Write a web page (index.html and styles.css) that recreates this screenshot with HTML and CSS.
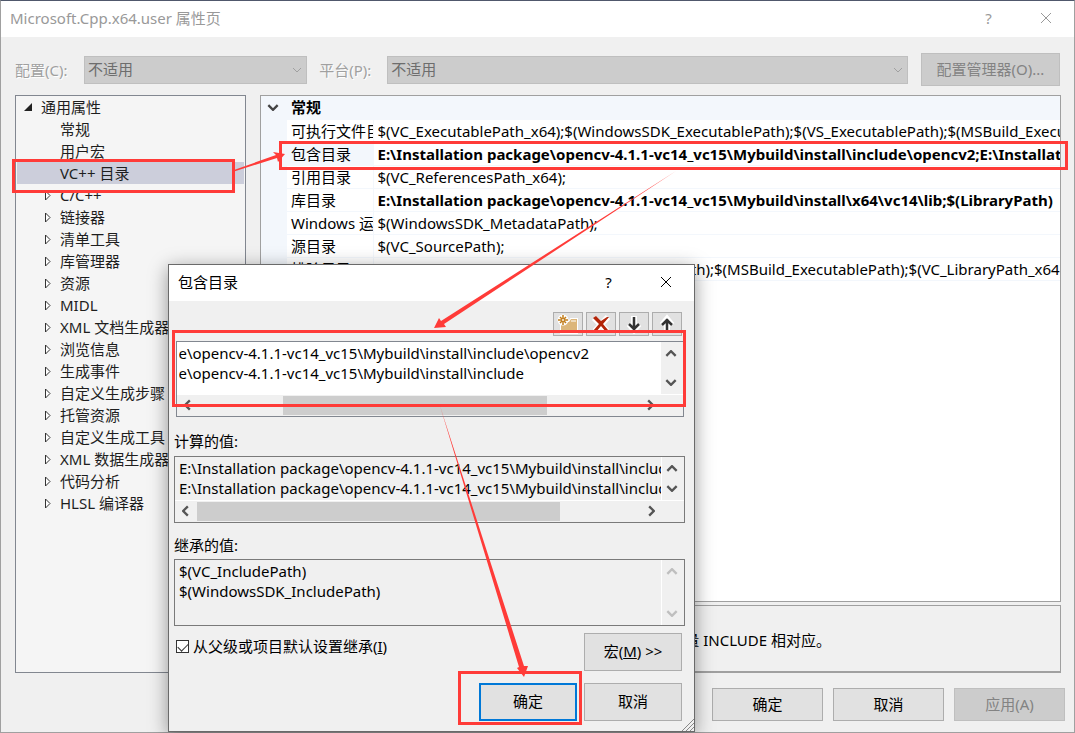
FILE: index.html
```html
<!DOCTYPE html>
<html lang="zh-CN">
<head>
    <meta charset="UTF-8">
    <meta name="viewport" content="width=device-width, initial-scale=1.0">
    <title>Microsoft.Cpp.x64.user 属性页</title>
    <link rel="stylesheet" href="styles.css">
</head>
<body>
    <svg class="sprite" width="0" height="0">
        <symbol id="close" viewBox="0 0 12 12"><path d="M1 1 11 11M11 1 1 11" fill="none" stroke="currentColor"/></symbol>
        <symbol id="down" viewBox="0 0 10 6"><path d="M1 1 5 5 9 1" fill="none" stroke="currentColor" stroke-width="2"/></symbol>
        <symbol id="up" viewBox="0 0 10 6"><path d="M1 5 5 1 9 5" fill="none" stroke="currentColor" stroke-width="2"/></symbol>
        <symbol id="left" viewBox="0 0 6 10"><path d="M5 1 1 5 5 9" fill="none" stroke="currentColor" stroke-width="2"/></symbol>
        <symbol id="right" viewBox="0 0 6 10"><path d="M1 1 5 5 1 9" fill="none" stroke="currentColor" stroke-width="2"/></symbol>
        <symbol id="node" viewBox="0 0 6 11"><path d="M.5 1V10L5 5.500Z" fill="#fff" stroke="#333"/></symbol>
    </svg>

    <div class="window">
        <header class="titlebar">
            <h1>Microsoft.Cpp.x64.user 属性页</h1>
            <button class="caption-btn" aria-label="帮助">?</button>
            <button class="caption-btn" aria-label="关闭"><svg width="12" height="12"><use href="#close"/></svg></button>
        </header>

        <div class="config-bar">
            <label for="config">配置(C):</label>
            <div class="combo combo-config">
                <select id="config" disabled><option>不适用</option></select>
                <svg class="combo-arrow" viewBox="0 0 10 6"><path d="M1 1 5 5 9 1" fill="none" stroke="currentColor"/></svg>
            </div>
            <label class="platform-label" for="platform">平台(P):</label>
            <div class="combo combo-platform">
                <select id="platform" disabled><option>不适用</option></select>
                <svg class="combo-arrow" viewBox="0 0 10 6"><path d="M1 1 5 5 9 1" fill="none" stroke="currentColor"/></svg>
            </div>
            <button class="btn manager-btn" disabled>配置管理器(O)...</button>
        </div>

        <main class="content">
            <ul class="tree">
                <li class="root"><svg width="8" height="8"><path d="M8 0V8H0Z" fill="#222"/></svg>通用属性</li>
                <li>常规</li>
                <li>用户宏</li>
                <li class="selected">VC++ 目录</li>
                <li><svg class="node"><use href="#node"/></svg>C/C++</li>
                <li><svg class="node"><use href="#node"/></svg>链接器</li>
                <li><svg class="node"><use href="#node"/></svg>清单工具</li>
                <li><svg class="node"><use href="#node"/></svg>库管理器</li>
                <li><svg class="node"><use href="#node"/></svg>资源</li>
                <li><svg class="node"><use href="#node"/></svg>MIDL</li>
                <li><svg class="node"><use href="#node"/></svg>XML 文档生成器</li>
                <li><svg class="node"><use href="#node"/></svg>浏览信息</li>
                <li><svg class="node"><use href="#node"/></svg>生成事件</li>
                <li><svg class="node"><use href="#node"/></svg>自定义生成步骤</li>
                <li><svg class="node"><use href="#node"/></svg>托管资源</li>
                <li><svg class="node"><use href="#node"/></svg>自定义生成工具</li>
                <li><svg class="node"><use href="#node"/></svg>XML 数据生成器</li>
                <li><svg class="node"><use href="#node"/></svg>代码分析</li>
                <li><svg class="node"><use href="#node"/></svg>HLSL 编译器</li>
            </ul>

            <div class="properties">
                <div class="grid">
                    <table>
                        <colgroup><col class="col-gutter"><col class="col-name"><col></colgroup>
                        <thead>
                            <tr><th class="gutter"><svg width="12" height="7"><use href="#down"/></svg></th><th colspan="2">常规</th></tr>
                        </thead>
                        <tbody>
                            <tr><td class="gutter"></td><td>可执行文件目录</td><td>$(VC_ExecutablePath_x64);$(WindowsSDK_ExecutablePath);$(VS_ExecutablePath);$(MSBuild_ExecutablePath)</td></tr>
                            <tr class="current"><td class="gutter"></td><td>包含目录</td><td class="changed">E:\Installation package\opencv-4.1.1-vc14_vc15\Mybuild\install\include\opencv2;E:\Installation package</td></tr>
                            <tr><td class="gutter"></td><td>引用目录</td><td>$(VC_ReferencesPath_x64);</td></tr>
                            <tr><td class="gutter"></td><td>库目录</td><td class="changed">E:\Installation package\opencv-4.1.1-vc14_vc15\Mybuild\install\x64\vc14\lib;$(LibraryPath)</td></tr>
                            <tr><td class="gutter"></td><td>Windows 运行时库</td><td>$(WindowsSDK_MetadataPath);</td></tr>
                            <tr><td class="gutter"></td><td>源目录</td><td>$(VC_SourcePath);</td></tr>
                            <tr><td class="gutter"></td><td>排除目录</td><td>$(VC_IncludePath);$(WindowsSDK_IncludePath);$(MSBuild_ExecutablePath);$(VC_LibraryPath_x64)</td></tr>
                        </tbody>
                    </table>
                </div>
                <div class="description">
                    <strong>包含目录</strong>
                    <p>生成 VC++ 项目期间，搜索包含文件时所使用的路径。与环境变量 INCLUDE 相对应。</p>
                </div>
            </div>
        </main>

        <footer class="actions">
            <button class="btn">确定</button>
            <button class="btn">取消</button>
            <button class="btn" disabled>应用(A)</button>
        </footer>
    </div>

    <div class="dialog" role="dialog" aria-labelledby="dialog-title">
        <header class="titlebar">
            <h2 id="dialog-title">包含目录</h2>
            <button class="caption-btn" aria-label="帮助">?</button>
            <button class="caption-btn" aria-label="关闭"><svg width="12" height="12"><use href="#close"/></svg></button>
        </header>
        <div class="dialog-body">
            <div class="tools">
                <button aria-label="新行">
                    <svg width="22" height="20" viewBox="0 0 22 20">
                        <path d="M4 8H12L14 5H20V19H4Z" fill="#dcb67a" stroke="#fff" stroke-width="2"/>
                        <path d="M4 8H12L14 5H20V19H4Z" fill="#dcb67a"/>
                        <path d="M14 7H19" stroke="#fff"/>
                        <circle cx="6" cy="6" r="5.500" fill="#fff"/>
                        <path d="M6 1V11M1 6H11M3 3 9 9M9 3 3 9" stroke="#c27d1a" stroke-width="1.500"/>
                        <circle cx="6" cy="6" r="1.500" fill="#fff" stroke="#c27d1a"/>
                    </svg>
                </button>
                <button aria-label="删除">
                    <svg width="20" height="20" viewBox="0 0 20 20">
                        <path d="M3 4 16 17M17 3 4 17" stroke="#fff" stroke-width="6"/>
                        <path d="M2 4 5 2 10 7 16 3 18 3 12 10 17 16 15 18 10 12 5 18 2 17 8 10Z" fill="#b32509"/>
                    </svg>
                </button>
                <button aria-label="下移">
                    <svg width="20" height="20" viewBox="0 0 20 20">
                        <path d="M10 2V16M5 10 10 16 15 10" fill="none" stroke="#fff" stroke-width="6"/>
                        <path d="M10 3V16M5 10 10 15 15 10" fill="none" stroke="#333" stroke-width="2.500"/>
                    </svg>
                </button>
                <button aria-label="上移">
                    <svg width="20" height="20" viewBox="0 0 20 20">
                        <path d="M10 18V5M5 11 10 5 15 11" fill="none" stroke="#fff" stroke-width="6"/>
                        <path d="M10 18V5M5 11 10 6 15 11" fill="none" stroke="#333" stroke-width="2.500"/>
                    </svg>
                </button>
            </div>

            <div class="box path-list">
                <ul class="paths">
                    <li>E:\Installation package\opencv-4.1.1-vc14_vc15\Mybuild\install\include\opencv2</li>
                    <li>E:\Installation package\opencv-4.1.1-vc14_vc15\Mybuild\install\include</li>
                </ul>
                <div class="vscroll"><svg width="12" height="7"><use href="#up"/></svg><svg width="12" height="7"><use href="#down"/></svg></div>
                <div class="hscroll"><svg width="7" height="12"><use href="#left"/></svg><div class="track"><div class="thumb thumb-middle"></div></div><svg width="7" height="12"><use href="#right"/></svg></div>
            </div>

            <label class="field-label" for="evaluated">计算的值:</label>
            <div class="box">
                <textarea id="evaluated" wrap="off" readonly>
E:\Installation package\opencv-4.1.1-vc14_vc15\Mybuild\install\include\opencv2
E:\Installation package\opencv-4.1.1-vc14_vc15\Mybuild\install\include</textarea>
                <div class="vscroll"><svg width="12" height="7"><use href="#up"/></svg><svg width="12" height="7"><use href="#down"/></svg></div>
                <div class="hscroll"><svg width="7" height="12"><use href="#left"/></svg><div class="track"><div class="thumb"></div></div><svg width="7" height="12"><use href="#right"/></svg></div>
            </div>

            <label class="field-label" for="inherited">继承的值:</label>
            <div class="box box-short">
                <textarea id="inherited" wrap="off" readonly>
$(VC_IncludePath)
$(WindowsSDK_IncludePath)</textarea>
                <div class="vscroll off"><svg width="12" height="7"><use href="#up"/></svg><svg width="12" height="7"><use href="#down"/></svg></div>
            </div>

            <div class="inherit-row">
                <label class="check"><input type="checkbox" checked><span>从父级或项目默认设置继承(<u>I</u>)</span></label>
                <button class="btn">宏(<u>M</u>) &gt;&gt;</button>
            </div>
            <div class="dialog-actions">
                <button class="btn default">确定</button>
                <button class="btn">取消</button>
            </div>
        </div>
        <svg class="grip" width="12" height="12"><path d="M0 12 12 0M4 12 12 4M8 12 12 8" stroke="#888"/></svg>
    </div>

    <!-- step markers and arrows over the windows -->
    <svg class="marks" width="1075" height="733" viewBox="0 0 1075 733">
        <g fill="none" stroke="#ff3b38" stroke-width="3">
            <rect x="13.500" y="160.500" width="220" height="31"/>
            <rect x="280.500" y="142.500" width="786" height="26"/>
            <rect x="173.500" y="331.500" width="511" height="74"/>
            <rect x="459.500" y="672.500" width="121" height="51"/>
        </g>
        <g fill="#ff3b38">
            <path d="M234 170 276 155 273 152 285 154 278 162 277 158 234 171.500Z"/>
            <path d="M676 171 441 321 439 318 434 328 446 327 444 324Z"/>
            <path d="M440 406 519 667 517 668 524 677 528 666 524 666Z"/>
        </g>
    </svg>
</body>
</html>
```
FILE: styles.css
```css
:root {
    --face: #f0f0f0;
    --button: #e1e1e1;
    --button-border: #adadad;
    --disabled: #cccccc;
    --disabled-border: #bfbfbf;
    --panel-border: #a0a0a0;
    --box-border: #828790;
    --grid-line: #f3f7fc;
    --selected: #cccedb;
}

* {
    box-sizing: border-box;
}

body {
    margin: 0;
    font-family: "Noto Sans", "Noto Sans CJK SC", sans-serif;
    font-size: 15px;
    line-height: 22px;
    color: #000;
}

button, select, textarea {
    font: inherit;
    color: inherit;
}

h1, h2, p, ul {
    margin: 0;
    padding: 0;
    font-size: 15px;
    font-weight: normal;
    list-style: none;
}

.sprite {
    position: absolute;
}

.window {
    display: flex;
    flex-direction: column;
    min-height: 100vh;
    background: var(--face);
    border: 1px solid var(--panel-border);
    border-top-color: #50586c;
}

.titlebar {
    display: flex;
    align-items: center;
    height: 36px;
    padding: 0 0 2px 9px;
    background: #fff;
}

.titlebar h1, .titlebar h2 {
    flex: 1;
}

.window > .titlebar {
    color: #999;
}

.caption-btn {
    display: flex;
    align-items: center;
    justify-content: center;
    width: 57px;
    height: 34px;
    padding: 0;
    border: none;
    background: none;
}

.config-bar {
    display: flex;
    align-items: center;
    padding: 16px 14px 9px;
    color: #a0a0a0;
}

.config-bar label {
    width: 69px;
    text-shadow: 1px 1px #fff;
}

.config-bar .platform-label {
    width: 68px;
    margin-left: 12px;
}

.combo {
    position: relative;
}

.combo-config {
    flex: 3 1 0;
}

.combo-platform {
    flex: 7 1 0;
}

.combo select {
    display: block;
    width: 100%;
    height: 28px;
    padding: 0 3px 2px;
    border: 1px solid var(--disabled-border);
    border-radius: 0;
    background: var(--disabled);
    color: #6d6d6d;
    opacity: 1;
    appearance: none;
}

.combo-arrow {
    position: absolute;
    right: 5px;
    top: 11px;
    width: 10px;
    height: 6px;
}

.btn {
    height: 33px;
    padding: 0 0 2px;
    border: 1px solid var(--button-border);
    background: var(--button);
}

.btn:disabled {
    border-color: var(--disabled-border);
    background: var(--disabled);
    color: #838383;
}

.manager-btn {
    width: 139px;
    margin-left: 13px;
}

.content {
    display: flex;
    flex: 1;
    gap: 14px;
    padding: 0 13px 0 14px;
}

.tree {
    width: 231px;
    padding: 0 1px;
    border: 1px solid var(--box-border);
    background: #f5f5f5;
}

.tree li {
    display: flex;
    align-items: center;
    height: 22px;
    padding-left: 43px;
    white-space: nowrap;
    color: #1e1e1e;
}

.tree li.root {
    gap: 9px;
    padding-left: 7px;
}

.tree li.selected {
    background: var(--selected);
}

.tree .node {
    width: 6px;
    height: 11px;
    margin: 0 9px 0 -15px;
}

.properties {
    display: flex;
    flex: 1;
    flex-direction: column;
    gap: 3px;
    min-width: 0;
}

.grid {
    flex: 1;
    overflow: hidden;
    border: 1px solid var(--panel-border);
    background: #fff;
}

.grid table {
    width: 100%;
    table-layout: fixed;
    border-collapse: collapse;
}

.col-gutter {
    width: 26px;
}

.col-name {
    width: 86px;
}

.grid th, .grid td {
    height: 23px;
    padding: 0 0 0 4px;
    overflow: hidden;
    white-space: nowrap;
    text-align: left;
    line-height: 22px;
    border-bottom: 1px solid var(--grid-line);
}

.grid td + td + td {
    border-left: 1px solid var(--grid-line);
}

.grid th, .grid .gutter, .grid .current td:nth-child(2) {
    background: var(--grid-line);
}

.grid th.gutter {
    padding-left: 6px;
}

.grid th svg {
    display: block;
    color: #444;
}

.grid .changed {
    font-weight: bold;
}

.description {
    height: 68px;
    padding: 1px 5px;
    border: 1px solid var(--panel-border);
    border-bottom-width: 2px;
}

.description strong {
    display: block;
}

.actions {
    display: flex;
    justify-content: flex-end;
    gap: 10px;
    padding: 15px 9px 11px;
}

.actions .btn {
    width: 111px;
}

/* include directories dialog */
.dialog {
    position: absolute;
    left: 168px;
    top: 264px;
    width: 527px;
    border: 1px solid #6a6a6a;
    background: var(--face);
    box-shadow: 0 4px 18px rgba(0, 0, 0, 0.4);
}

.dialog-body {
    padding: 11px 9px 10px 5px;
}

.tools {
    display: flex;
    justify-content: flex-end;
    gap: 3px;
    padding-right: 3px;
}

.tools button {
    display: flex;
    align-items: center;
    justify-content: center;
    width: 30px;
    height: 24px;
    padding: 0;
    border: 1px solid var(--button-border);
    background: var(--button);
}

.box {
    display: grid;
    grid-template-columns: 1fr 22px;
    grid-template-rows: 1fr 22px;
    height: 67px;
    border: 1px solid #7a7a7a;
}

.box-short {
    grid-template-rows: 1fr;
}

.path-list {
    height: 76px;
    margin: 5px 1px 0 2px;
    border-color: var(--box-border);
    background: #fff;
}

.paths {
    margin-left: 2px;
    padding-top: 1px;
    overflow: hidden;
    white-space: nowrap;
    line-height: 20px;
    text-indent: -152px;
}

.box textarea {
    width: 100%;
    min-width: 0;
    height: 100%;
    padding: 1px 5px 0 4px;
    border: none;
    border-right: 1px solid #fff;
    background: none;
    line-height: 20px;
    overflow: hidden;
    resize: none;
}

.vscroll {
    display: flex;
    flex-direction: column;
    align-items: center;
    justify-content: space-between;
    padding: 8px 2px 8px 0;
    background: var(--face);
    color: #555;
}

.vscroll.off {
    color: #bfbfbf;
}

.hscroll {
    display: flex;
    grid-column: 1 / 3;
    align-items: center;
    gap: 8px;
    padding: 0 29px 1px 7px;
    background: var(--face);
    border-top: 1px solid #fff;
    color: #555;
}

.track {
    flex: 1;
}

.thumb {
    width: 82%;
    height: 19px;
    background: #cdcdcd;
}

.thumb-middle {
    width: 60%;
    margin-left: 19%;
}

.field-label {
    display: block;
    padding: 11px 0 3px;
}

.path-list + .field-label {
    padding-top: 13px;
    padding-bottom: 4px;
}

.inherit-row {
    display: flex;
    align-items: flex-start;
    justify-content: space-between;
    padding: 7px 3px 12px 2px;
}

.check {
    display: flex;
    align-items: center;
    gap: 4px;
    padding-top: 2px;
}

.check input {
    display: grid;
    place-content: center;
    width: 13px;
    height: 13px;
    margin: 0;
    border: 1px solid #333;
    background: #fff;
    appearance: none;
}

.check input:checked::before {
    content: "";
    width: 9px;
    height: 5px;
    border: solid #333;
    border-width: 0 0 1px 1px;
    transform: rotate(-45deg);
}

.dialog .btn {
    width: 98px;
    height: 38px;
}

.dialog .default {
    border: 2px solid #0078d7;
}

.dialog-actions {
    display: flex;
    justify-content: flex-end;
    gap: 7px;
    padding-right: 3px;
}

.grip {
    position: absolute;
    right: 0;
    bottom: 0;
}

.marks {
    position: absolute;
    left: 0;
    top: 0;
    pointer-events: none;
}
```
